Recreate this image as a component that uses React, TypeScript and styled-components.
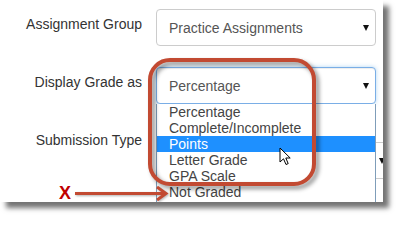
import styled, { createGlobalStyle } from 'styled-components';

const GlobalStyle = createGlobalStyle`
  html, body {
    margin: 0;
    padding: 0;
    background: #ffffff;
  }
  body {
    width: 412px;
    height: 228px;
    overflow: hidden;
    font-family: 'Liberation Sans', Arial, sans-serif;
  }
`;

const Shot = styled.div`
  position: relative;
  width: 383px;
  height: 202px;
  background: #ffffff;
  overflow: hidden;
  box-shadow: 6px 6px 5px rgba(0, 0, 0, 0.55);
`;

const Form = styled.div`
  display: flex;
  flex-direction: column;
  gap: 21px;
  padding-top: 9px;
`;

const Row = styled.div`
  display: grid;
  grid-template-columns: 142px 220px;
  column-gap: 14px;
  align-items: start;
`;

const Label = styled.div<{ $pad: number }>`
  text-align: right;
  font-size: 14px;
  line-height: 20px;
  color: #333333;
  padding-top: ${(p) => p.$pad}px;
  white-space: nowrap;
`;

const Control = styled.div`
  position: relative;
`;

const Select = styled.div<{ $focus?: boolean; $wide?: boolean; $offset?: number }>`
  box-sizing: border-box;
  height: 37px;
  width: ${(p) => (p.$wide ? '236px' : '220px')};
  margin-top: ${(p) => p.$offset ?? 0}px;
  display: flex;
  align-items: center;
  justify-content: space-between;
  padding: 0 6px 0 12px;
  border: 1px solid ${(p) => (p.$focus ? '#7aaee6' : '#cccccc')};
  border-radius: 4px;
  box-shadow: ${(p) =>
    p.$focus ? 'inset 0 1px 1px rgba(0,0,0,.075), 0 0 4px rgba(102,175,233,.5)' : 'none'};
  font-size: 14px;
  color: #555555;
  background: #ffffff;
`;

const Caret = styled.span`
  width: 0;
  height: 0;
  margin-left: auto;
  border-left: 3px solid transparent;
  border-right: 3px solid transparent;
  border-top: 6px solid #111111;
  margin-top: 1px;
`;

const Options = styled.ul`
  position: absolute;
  top: 100%;
  left: 0;
  z-index: 2;
  box-sizing: border-box;
  width: 220px;
  height: 100px;
  margin: 0;
  padding: 0;
  list-style: none;
  background: #ffffff;
  border: 1px solid #7f9db9;
  border-top: none;
`;

const Option = styled.li<{ $active?: boolean }>`
  height: 16px;
  line-height: 16px;
  padding-left: 12px;
  font-size: 14px;
  color: ${(p) => (p.$active ? '#ffffff' : '#444444')};
  background: ${(p) => (p.$active ? '#1e90ff' : 'transparent')};
  white-space: nowrap;
`;

const Callout = styled.div`
  position: absolute;
  left: 148px;
  top: 58px;
  width: 168px;
  height: 128px;
  box-sizing: border-box;
  border: 4px solid #c24a32;
  border-radius: 22px;
  z-index: 3;
  filter: drop-shadow(3px 3px 2px rgba(0, 0, 0, 0.45));
`;

const Mark = styled.span`
  position: absolute;
  left: 59px;
  top: 182px;
  font-size: 18px;
  font-weight: bold;
  line-height: 22px;
  color: #c00000;
  z-index: 3;
`;

const Arrow = styled.svg`
  position: absolute;
  left: 73px;
  top: 185px;
  z-index: 3;
  filter: drop-shadow(1px 1px 1px rgba(0, 0, 0, 0.3));
`;

const Pointer = styled.svg`
  position: absolute;
  left: 279px;
  top: 147px;
  z-index: 4;
`;

const options = ['Percentage', 'Complete/Incomplete', 'Points', 'Letter Grade', 'GPA Scale', 'Not Graded'];

export default function App() {
  return (
    <>
      <GlobalStyle />
      <Shot>
        <Form>
          <Row>
            <Label $pad={5}>Assignment Group</Label>
            <Control>
              <Select>
                Practice Assignments
                <Caret />
              </Select>
            </Control>
          </Row>
          <Row>
            <Label $pad={5}>Display Grade as</Label>
            <Control>
              <Select $focus>
                Percentage
                <Caret />
              </Select>
              <Options>
                {options.map((o) => (
                  <Option key={o} $active={o === 'Points'}>
                    {o}
                  </Option>
                ))}
              </Options>
            </Control>
          </Row>
          <Row>
            <Label $pad={5}>Submission Type</Label>
            <Control>
              <Select $wide $offset={17}>
                <Caret />
              </Select>
            </Control>
          </Row>
        </Form>

        <Callout />
        <Mark>X</Mark>
        <Arrow width="98" height="17" viewBox="0 0 98 17">
          <line x1="2" y1="8.5" x2="92" y2="8.5" stroke="#c24a32" strokeWidth="3" />
          <polyline points="84,2 93,8.5 84,15" fill="none" stroke="#c24a32" strokeWidth="3" />
        </Arrow>
        <Pointer width="13" height="19" viewBox="0 0 13 19">
          <path
            d="M1 1 L1 15 L4.5 11.8 L7 17.5 L9.2 16.6 L6.8 11 L11.2 11 Z"
            fill="#ffffff"
            stroke="#000000"
            strokeWidth="1"
            strokeLinejoin="round"
          />
        </Pointer>
      </Shot>
    </>
  );
}
